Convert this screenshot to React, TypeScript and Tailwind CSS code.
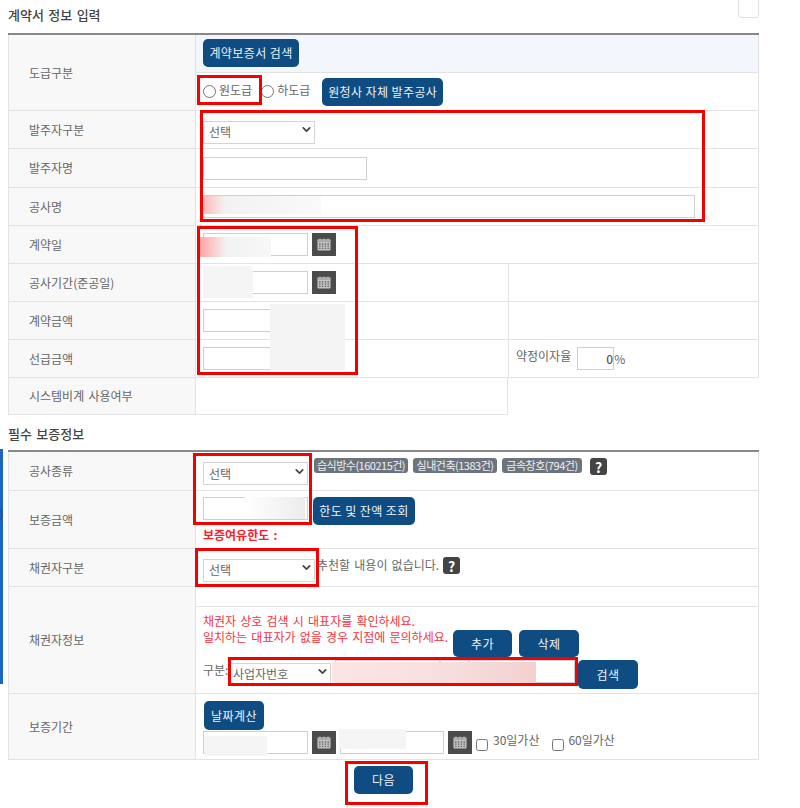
import type { ReactNode } from "react";
import { ChevronDown } from "lucide-react";

const font = "font-['Noto_Sans_CJK_KR','Noto_Sans',sans-serif]";

function Btn({ children, className = "" }: { children: ReactNode; className?: string }) {
  return (
    <button
      className={`shrink-0 rounded-[5px] bg-[#0f4c81] text-[12px] tracking-[0.4px] text-[#eef3f8] ${className}`}
    >
      {children}
    </button>
  );
}

function Field({ className = "" }: { className?: string }) {
  return <input type="text" className={`h-[23px] border border-[#cfcfcf] bg-white outline-none ${className}`} />;
}

function Select({ label, className = "", tight = false }: { label: string; className?: string; tight?: boolean }) {
  return (
    <div className={`relative h-[23px] shrink-0 ${className}`}>
      <select
        className={`h-full w-full appearance-none border border-[#d4d4d4] bg-white text-[12px] text-[#666] outline-none ${
          tight ? "pl-[2px]" : "pl-[5px]"
        }`}
      >
        <option>{label}</option>
      </select>
      <ChevronDown
        size={13}
        strokeWidth={3.2}
        className="pointer-events-none absolute right-[2px] top-[5px] text-[#444]"
      />
    </div>
  );
}

function CalBtn({ className = "" }: { className?: string }) {
  return (
    <div className={`flex h-[23px] w-[24px] shrink-0 items-center justify-center bg-[#4b4b4b] ${className}`}>
      <svg width="14" height="13" viewBox="0 0 14 13" fill="none">
        <rect x="0.5" y="1.5" width="13" height="11" rx="1" fill="#c4c4c4" />
        <rect x="0.5" y="1.5" width="13" height="2.5" fill="#a8a8a8" />
        <path d="M3 0.5v2M7 0.5v2M11 0.5v2" stroke="#c4c4c4" />
        <path
          d="M2 6h1.5M4.8 6h1.5M7.7 6h1.5M10.5 6h1.5M2 8.2h1.5M4.8 8.2h1.5M7.7 8.2h1.5M10.5 8.2h1.5M2 10.4h1.5M4.8 10.4h1.5M7.7 10.4h1.5M10.5 10.4h1.5"
          stroke="#6a6a6a"
          strokeWidth="1.3"
        />
      </svg>
    </div>
  );
}

function Help({ className = "" }: { className?: string }) {
  return (
    <span
      className={`flex h-[17px] w-[17px] shrink-0 items-center justify-center rounded-[3px] bg-[#444] text-[14px] font-bold leading-none text-white ${className}`}
    >
      ?
    </span>
  );
}

function Tag({ children, className = "" }: { children: ReactNode; className?: string }) {
  return (
    <span
      className={`flex h-[15px] shrink-0 items-center justify-center whitespace-nowrap rounded-[3px] bg-[#6c757d] text-[11px] tracking-[-0.5px] text-[#eef0f1] ${className}`}
    >
      {children}
    </span>
  );
}

function Row({
  label,
  height,
  children,
  className = "",
}: {
  label: string;
  height: string;
  children?: ReactNode;
  className?: string;
}) {
  return (
    <div className={`flex border-b border-l border-r border-[#e3e3e3] ${height} ${className}`}>
      <div className="flex w-[187px] shrink-0 items-center border-r border-[#e3e3e3] bg-[#f8f8f8] pl-[20px] text-[12px] text-[#666]">
        {label}
      </div>
      <div className="min-w-0 flex-1">{children}</div>
    </div>
  );
}

function Cell({ children, className = "" }: { children?: ReactNode; className?: string }) {
  return <div className={`flex h-full items-center pl-[7px] ${className}`}>{children}</div>;
}

function SplitCell({ children, right }: { children: ReactNode; right?: ReactNode }) {
  return (
    <div className="flex h-full">
      <div className="flex w-[313px] shrink-0 items-center border-r border-[#e3e3e3] pl-[7px]">{children}</div>
      <div className="flex flex-1 items-center pl-[7px]">{right}</div>
    </div>
  );
}

function RedBox({ className }: { className: string }) {
  return <div className={`pointer-events-none absolute border-[3px] border-[#f50000] ${className}`} />;
}

function Smudge({ className }: { className: string }) {
  return <div className={`pointer-events-none absolute ${className}`} />;
}

export default function App() {
  return (
    <div className={`relative h-[808px] w-[800px] overflow-hidden bg-white [word-spacing:1.5px] ${font}`}>
      <div className="absolute right-[41px] top-[-4px] h-[22px] w-[21px] rounded-[3px] border border-[#e0e0e0] bg-white" />

      {/* stray edge of the panel behind */}
      <div className="absolute left-0 top-[449px] h-[235px] w-[3px] bg-[#1a66c2]" />
      <span className="absolute left-0 top-[505px] text-[11px] text-[#444]">)</span>

      <h2 className="flex h-[33px] items-center pb-[4px] pl-[8px] text-[13px] font-medium text-[#444]">
        계약서 정보 입력
      </h2>

      <div className="ml-[8px] w-[751px]">
        <div className="border-t-2 border-[#888]">
          <Row label="도급구분" height="h-[76px]">
            <div className="flex h-[38px] items-center border-b border-[#e3e3e3] bg-[#f3f6fd] pb-[2px] pl-[7px]">
              <Btn className="h-[28px] w-[96px]">계약보증서 검색</Btn>
            </div>
            <div className="flex h-[37px] items-center pl-[7px] text-[12px] text-[#666]">
              <input type="radio" className="m-0 h-[13px] w-[13px]" />
              <span className="ml-[3px] mt-[-3px]">원도급</span>
              <input type="radio" className="m-0 ml-[9px] h-[13px] w-[13px]" />
              <span className="ml-[3px] mt-[-3px]">하도급</span>
              <Btn className="ml-[12px] h-[28px] w-[121px]">원청사 자체 발주공사</Btn>
            </div>
          </Row>
          <Row label="발주자구분" height="h-[38px]">
            <Cell>
              <Select label="선택" className="w-[112px]" />
            </Cell>
          </Row>
          <Row label="발주자명" height="h-[39px]">
            <Cell>
              <Field className="w-[164px]" />
            </Cell>
          </Row>
          <Row label="공사명" height="h-[38px]">
            <Cell>
              <Field className="w-[492px]" />
            </Cell>
          </Row>
          <Row label="계약일" height="h-[38px]">
            <Cell>
              <Field className="w-[105px]" />
              <CalBtn className="ml-[4px]" />
            </Cell>
          </Row>
          <Row label="공사기간(준공일)" height="h-[38px]">
            <SplitCell>
              <Field className="w-[105px]" />
              <CalBtn className="ml-[4px]" />
            </SplitCell>
          </Row>
          <Row label="계약금액" height="h-[38px]">
            <SplitCell>
              <Field className="w-[105px]" />
            </SplitCell>
          </Row>
          <Row label="선급금액" height="h-[38px]">
            <SplitCell
              right={
                <div className="flex items-center text-[12px] text-[#666]">
                  <span className="mt-[-6px] whitespace-nowrap">약정이자율</span>
                  <input
                    type="text"
                    readOnly
                    value="0"
                    className="ml-[6px] h-[23px] w-[37px] border border-[#cfcfcf] text-right font-medium text-[#555] outline-none"
                  />
                  <span>%</span>
                </div>
              }
            >
              <Field className="w-[105px]" />
            </SplitCell>
          </Row>
          <Row label="시스템비계 사용여부" height="h-[37px]" className="w-[500px]" />
        </div>

        <h2 className="ml-[-8px] flex h-[35px] items-center pl-[8px] pt-[2px] text-[13px] font-medium text-[#444]">
          필수 보증정보
        </h2>

        <div className="border-t-2 border-[#888]">
          <Row label="공사종류" height="h-[39px]">
            <Cell>
              <Select label="선택" className="w-[105px]" />
              <div className="mb-[12px] ml-[6px] flex items-center">
                <Tag className="w-[94px]">습식방수(160215건)</Tag>
                <Tag className="ml-[5px] w-[84px]">실내건축(1383건)</Tag>
                <Tag className="ml-[5px] w-[80px]">금속창호(794건)</Tag>
                <Help className="ml-[8px] mt-[3px]" />
              </div>
            </Cell>
          </Row>
          <Row label="보증금액" height="h-[58px]">
            <div className="pl-[7px] pt-[6px]">
              <div className="flex items-start">
                <Field className="w-[105px]" />
                <Btn className="ml-[5px] h-[28px] w-[102px]">한도 및 잔액 조회</Btn>
              </div>
              <p className="mt-[1px] text-[12px] font-bold leading-[18px] text-[#f5222d]">보증여유한도 :</p>
            </div>
          </Row>
          <Row label="채권자구분" height="h-[38px]">
            <Cell>
              <Select label="선택" className="w-[112px]" />
              <span className="ml-[2px] mt-[-5px] whitespace-nowrap text-[12px] text-[#666]">
                추천할 내용이 없습니다.
              </span>
              <Help className="ml-[4px] mt-[-4px]" />
            </Cell>
          </Row>
          <Row label="채권자정보" height="h-[107px]">
            <div className="h-[20px] border-b border-[#e3e3e3]" />
            <div className="pl-[7px] pt-[6px]">
              <div className="flex items-end">
                <div className="mb-[12px] w-[250px] whitespace-nowrap text-[12px] leading-[16px] text-[#f5333f]">
                  <p>채권자 상호 검색 시 대표자를 확인하세요.</p>
                  <p>일치하는 대표자가 없을 경우 지점에 문의하세요.</p>
                </div>
                <Btn className="h-[27px] w-[59px]">추가</Btn>
                <Btn className="ml-[7px] h-[27px] w-[60px]">삭제</Btn>
              </div>
              <div className="mt-[3px] flex items-start">
                <span className="mt-[1px] w-[27px] overflow-hidden whitespace-nowrap text-[12px] text-[#666]">
                  구분:
                </span>
                <Select label="사업자번호" tight className="w-[101px]" />
                <Field className="ml-[4px] w-[105px]" />
                <Field className="w-[29px]" />
                <Field className="w-[106px]" />
                <Btn className="ml-[3px] h-[29px] w-[60px]">검색</Btn>
              </div>
            </div>
          </Row>
          <Row label="보증기간" height="h-[66px]">
            <div className="pl-[7px] pt-[7px]">
              <Btn className="ml-[1px] block h-[29px] w-[60px]">날짜계산</Btn>
              <div className="mt-[1px] flex items-center text-[12px] text-[#666]">
                <Field className="w-[105px]" />
                <CalBtn className="ml-[4px]" />
                <Field className="ml-[4px] w-[104px]" />
                <CalBtn className="ml-[4px]" />
                <input type="checkbox" className="m-0 ml-[4px] mt-[5px] h-[12px] w-[12px]" />
                <span className="ml-[5px] mt-[-5px] whitespace-nowrap">30일가산</span>
                <input type="checkbox" className="m-0 ml-[13px] mt-[5px] h-[12px] w-[12px]" />
                <span className="ml-[4px] mt-[-5px] whitespace-nowrap">60일가산</span>
              </div>
            </div>
          </Row>
        </div>

        <div className="flex justify-center pt-[6px]">
          <Btn className="h-[28px] w-[59px]">다음</Btn>
        </div>
      </div>

      {/* masked values */}
      <Smudge className="left-[201px] top-[196px] h-[18px] w-[120px] bg-gradient-to-r from-[#fbb4b4] via-[#f2f2f2] via-20% to-[#fafafa]" />
      <Smudge className="left-[197px] top-[237px] h-[20px] w-[74px] bg-gradient-to-r from-[#fb9d9d] via-[#f2f2f2] via-40% to-[#f8f8f8]" />
      <Smudge className="left-[203px] top-[266px] h-[32px] w-[50px] bg-[#f5f5f5]" />
      <Smudge className="left-[270px] top-[304px] h-[66px] w-[75px] bg-[#f4f4f4]" />
      <Smudge className="left-[245px] top-[497px] h-[22px] w-[60px] bg-gradient-to-r from-[#ffffff] to-[#ececec]" />
      <Smudge className="left-[332px] top-[662px] h-[21px] w-[204px] bg-gradient-to-r from-[#fbe4e4] via-[#f8e0e0] to-[#f3d0d0]" />
      <Smudge className="left-[204px] top-[736px] h-[20px] w-[63px] bg-[#f5f5f5]" />
      <Smudge className="left-[339px] top-[729px] h-[20px] w-[67px] bg-[#f5f5f5]" />

      {/* red annotation boxes */}
      <RedBox className="left-[197px] top-[75px] h-[30px] w-[65px]" />
      <RedBox className="left-[200px] top-[110px] h-[112px] w-[505px]" />
      <RedBox className="left-[197px] top-[226px] h-[149px] w-[161px]" />
      <RedBox className="left-[193px] top-[453px] h-[72px] w-[119px]" />
      <RedBox className="left-[195px] top-[548px] h-[39px] w-[124px]" />
      <RedBox className="left-[228px] top-[657px] h-[29px] w-[350px]" />
      <RedBox className="left-[345px] top-[761px] h-[44px] w-[83px]" />
    </div>
  );
}
